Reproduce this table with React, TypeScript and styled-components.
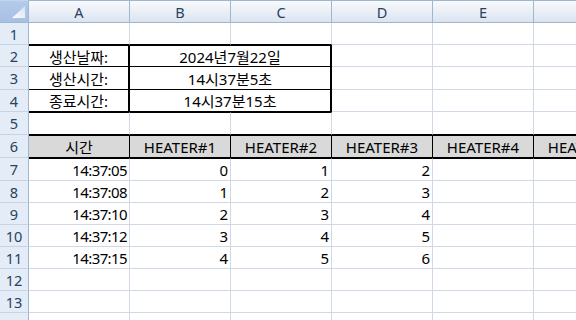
import styled, { createGlobalStyle } from 'styled-components';

const GlobalStyle = createGlobalStyle`
  html, body {
    margin: 0;
    padding: 0;
    background: #fff;
    overflow: hidden;
  }
  body {
    font-family: "Noto Sans", "Noto Sans CJK KR", sans-serif;
  }
`;

const GRID = '#d0d7e5';
const HEAD_LINE = '#9eb6ce';
const BLACK = '1px solid #000';
const THICK = '2px solid #000';

// pixel heights of header row + rows 1..14
const ROW_HEIGHTS = [23, 22, 22, 23, 22, 23, 23, 23, 22, 22, 22, 22, 22, 22, 22];

const Sheet = styled.div`
  width: 576px;
  height: 320px;
  overflow: hidden;
  background: #fff;
`;

const Grid = styled.div`
  display: grid;
  grid-template-columns: 29px repeat(6, 101px);
  grid-template-rows: ${ROW_HEIGHTS.map((h) => `${h}px`).join(' ')};
  width: max-content;
  font-size: 15px;
  color: #000;
`;

const Corner = styled.div`
  box-sizing: border-box;
  background: linear-gradient(#b4cbea, #a6c0e5);
  border-right: 1px solid ${HEAD_LINE};
  border-bottom: 1px solid ${HEAD_LINE};
  border-top: 1px solid #c3d4ec;

  svg {
    display: block;
  }
`;

const ColHead = styled.div`
  box-sizing: border-box;
  display: flex;
  align-items: center;
  justify-content: center;
  background: linear-gradient(#f7f9fc, #e9eef6 55%, #dbe3ef);
  border-top: 1px solid ${HEAD_LINE};
  border-right: 1px solid ${HEAD_LINE};
  border-bottom: 1px solid ${HEAD_LINE};
  color: #27415f;
  font-size: 14.5px;
`;

const RowHead = styled.div`
  box-sizing: border-box;
  display: flex;
  align-items: center;
  justify-content: center;
  background: #e4ecf7;
  border-right: 1px solid ${HEAD_LINE};
  border-bottom: 1px solid #c5d3e4;
  color: #27415f;
  font-size: 14.5px;
`;

type Align = 'left' | 'center' | 'right';

const Cell = styled.div<{
  $align?: Align;
  $span?: number;
  $fill?: string;
  $top?: string;
  $right?: string;
  $bottom?: string;
  $tight?: boolean;
}>`
  box-sizing: border-box;
  display: flex;
  align-items: center;
  justify-content: ${(p) =>
    p.$align === 'right' ? 'flex-end' : p.$align === 'center' ? 'center' : 'flex-start'};
  padding: 0 2px;
  white-space: nowrap;
  overflow: hidden;
  letter-spacing: ${(p) => (p.$tight ? '-0.6px' : 'normal')};
  grid-column: span ${(p) => p.$span ?? 1};
  background: ${(p) => p.$fill ?? '#fff'};
  border-top: ${(p) => p.$top ?? 'none'};
  border-right: ${(p) => p.$right ?? `1px solid ${GRID}`};
  border-bottom: ${(p) => p.$bottom ?? `1px solid ${GRID}`};
`;

const COLS = ['A', 'B', 'C', 'D', 'E', 'F'];

const info = [
  ['생산날짜:', '2024년7월22일'],
  ['생산시간:', '14시37분5초'],
  ['종료시간:', '14시37분15초'],
];

const heaters = ['시간', 'HEATER#1', 'HEATER#2', 'HEATER#3', 'HEATER#4', 'HEATER#5'];

const records = [
  { time: '14:37:05', values: [0, 1, 2] },
  { time: '14:37:08', values: [1, 2, 3] },
  { time: '14:37:10', values: [2, 3, 4] },
  { time: '14:37:12', values: [3, 4, 5] },
  { time: '14:37:15', values: [4, 5, 6] },
];

function SelectAll() {
  return (
    <Corner>
      <svg width="28" height="21" viewBox="0 0 28 21">
        <defs>
          <linearGradient id="tri" x1="0" y1="1" x2="1" y2="0">
            <stop offset="0" stopColor="#ffffff" />
            <stop offset="1" stopColor="#d6e1f0" />
          </linearGradient>
        </defs>
        <polygon points="12,17 25,17 25,5" fill="url(#tri)" />
      </svg>
    </Corner>
  );
}

export default function App() {
  return (
    <Sheet>
      <GlobalStyle />
      <Grid>
        <SelectAll />
        {COLS.map((c) => (
          <ColHead key={c}>{c}</ColHead>
        ))}

        {/* row 1 */}
        <RowHead>1</RowHead>
        <Cell $bottom={BLACK} />
        <Cell $bottom={BLACK} />
        <Cell $bottom={BLACK} />
        <Cell />
        <Cell />
        <Cell />

        {/* rows 2-4: info box */}
        {info.map(([label, value], i) => (
          <InfoRow key={label} n={i + 2} label={label} value={value} first={i === 0} />
        ))}

        {/* row 5 */}
        <RowHead>5</RowHead>
        <Cell $top={BLACK} $bottom={BLACK} />
        <Cell $top={BLACK} $bottom={BLACK} />
        <Cell $top={BLACK} $bottom={BLACK} />
        <Cell $bottom={BLACK} />
        <Cell $bottom={BLACK} />
        <Cell $bottom={BLACK} />

        {/* row 6: table header */}
        <RowHead>6</RowHead>
        {heaters.map((h) => (
          <Cell key={h} $align="center" $fill="#d9d9d9" $top={BLACK} $bottom={BLACK} $right={BLACK}>
            {h}
          </Cell>
        ))}

        {/* rows 7-11 */}
        {records.map((r, i) => (
          <DataRow key={r.time} n={i + 7} time={r.time} values={r.values} first={i === 0} />
        ))}

        {[12, 13, 14].map((n) => (
          <EmptyRow key={n} n={n} />
        ))}
      </Grid>
    </Sheet>
  );
}

function InfoRow({ n, label, value, first }: { n: number; label: string; value: string; first: boolean }) {
  const top = first ? BLACK : undefined;
  return (
    <>
      <RowHead>{n}</RowHead>
      <Cell $align="center" $top={top} $right={THICK} $bottom={BLACK}>
        {label}
      </Cell>
      <Cell $align="center" $span={2} $top={top} $right={THICK} $bottom={BLACK}>
        {value}
      </Cell>
      <Cell />
      <Cell />
      <Cell />
    </>
  );
}

function DataRow({ n, time, values, first }: { n: number; time: string; values: number[]; first: boolean }) {
  const top = first ? BLACK : undefined;
  return (
    <>
      <RowHead>{n}</RowHead>
      <Cell $align="right" $top={top} $tight>
        {time}
      </Cell>
      {values.map((v, i) => (
        <Cell key={i} $align="right" $top={top}>
          {v}
        </Cell>
      ))}
      <Cell $top={top} />
      <Cell $top={top} />
    </>
  );
}

function EmptyRow({ n }: { n: number }) {
  return (
    <>
      <RowHead>{n}</RowHead>
      {COLS.map((c) => (
        <Cell key={c} />
      ))}
    </>
  );
}
